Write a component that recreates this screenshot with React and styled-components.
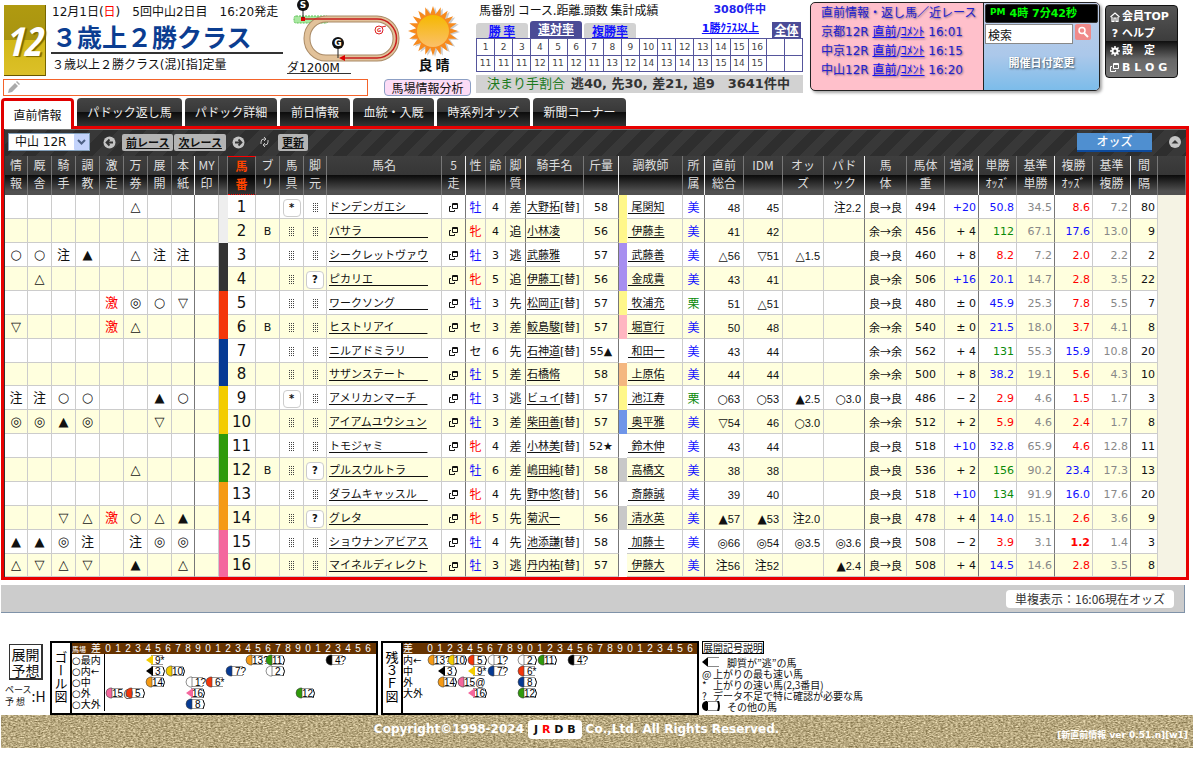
import { useState } from "react";
import styled, { createGlobalStyle, css } from "styled-components";

const latin = `"DejaVu Sans", "Noto Sans CJK JP", sans-serif`;
const cjk = `"Noto Sans CJK JP", sans-serif`;

// frame colours, one for every pair of horses
const frames = ["#eeeeee", "#333333", "#f4360a", "#063a94", "#f3cc00", "#2f9a0a", "#f59a14", "#f4679d"];

const YELLOW = "#fff78a";
const PURPLE = "#a78ff0";
const GREY = "#c8c8c8";

const tabs = [
  { name: "パドック返し馬", width: 105 },
  { name: "パドック詳細", width: 92 },
  { name: "前日情報", width: 70 },
  { name: "血統・入厩", width: 81 },
  { name: "時系列オッズ", width: 93 },
  { name: "新聞コーナー", width: 93 },
];

// w: width, l: the lines of the title, heavy: strong line on the right
const columns = [
  { w: 23, l: ["情", "報"] },
  { w: 24, l: ["厩", "舎"] },
  { w: 24, l: ["騎", "手"] },
  { w: 24, l: ["調", "教"] },
  { w: 24, l: ["激", "走"] },
  { w: 24, l: ["万", "券"] },
  { w: 24, l: ["展", "開"] },
  { w: 23, l: ["本", "紙"], heavy: true },
  { w: 24, l: ["MY", "印"] },
  { w: 9, l: [] },
  { w: 28, l: ["馬", "番"], sorted: true },
  { w: 24, l: ["ブ", "リ"] },
  { w: 24, l: ["馬", "具"] },
  { w: 23, l: ["脚", "元"] },
  { w: 115, l: ["馬名"] },
  { w: 24, l: ["5", "走"], heavy: true },
  { w: 20, l: ["性"] },
  { w: 20, l: ["齢"] },
  { w: 20, l: ["脚", "質"], heavy: true },
  { w: 58, l: ["騎手名"] },
  { w: 35, l: ["斤量"], heavy: true },
  { w: 8, l: ["調教師"], span: 2 },
  { w: 56, skip: true },
  { w: 22, l: ["所", "属"], heavy: true },
  { w: 39, l: ["直前", "総合"] },
  { w: 39, l: ["IDM"] },
  { w: 41, l: ["オッ", "ズ"] },
  { w: 41, l: ["パド", "ック"], heavy: true },
  { w: 42, l: ["馬", "体"] },
  { w: 38, l: ["馬体", "重"] },
  { w: 34, l: ["増減"], heavy: true },
  { w: 38, l: ["単勝", "ｵｯｽﾞ"] },
  { w: 38, l: ["基準", "単勝"], heavy: true },
  { w: 38, l: ["複勝", "ｵｯｽﾞ"] },
  { w: 38, l: ["基準", "複勝"], heavy: true },
  { w: 27, l: ["間", "隔"] },
  { l: [] },
];

// marks, blinkers, gear, legs, name, sex, age, style, jockey, changed, weight, trainer,
// trainer colour, area, index x4, track, body, diff, win, base win, place, base place, interval
const horses = [
  ["     △  ", "", "*", "", "ドンデンガエシ", "牡", 4, "差", "大野拓", 1, "58", "尾関知", YELLOW, "美", "48", "45", "", "注2.2", "良→良", 494, "+20", "50.8", "34.5", "8.6", "7.2", 80],
  ["        ", "B", "", "", "バサラ", "牝", 4, "追", "小林凌", 0, "56", "伊藤圭", YELLOW, "美", "41", "42", "", "", "余→余", 456, "+ 4", "112", "67.1", "17.6", "13.0", 9],
  ["○○注▲ △注注", "", "", "", "シークレットヴァウ", "牡", 3, "逃", "武藤雅", 0, "57", "武藤善", PURPLE, "美", "△56", "▽51", "△1.5", "", "良→良", 460, "+ 8", "8.2", "7.2", "2.0", "2.2", 2],
  [" △      ", "", "", "?", "ピカリエ", "牝", 5, "追", "伊藤工", 1, "56", "金成貴", PURPLE, "美", "43", "41", "", "", "良→余", 506, "+16", "20.1", "14.7", "2.8", "3.5", 22],
  ["    激◎○▽", "", "", "", "ワークソング", "牡", 3, "先", "松岡正", 1, "57", "牧浦充", YELLOW, "栗", "51", "△51", "", "", "良→良", 480, "± 0", "45.9", "25.3", "7.8", "5.5", 7],
  ["▽   激△  ", "B", "", "", "ヒストリアイ", "セ", 3, "差", "鮫島駿", 1, "57", "堀宣行", "#ffb6c1", "美", "50", "48", "", "", "余→余", 540, "± 0", "21.5", "18.0", "3.7", "4.1", 8],
  ["        ", "", "", "", "ニルアドミラリ", "セ", 6, "先", "石神道", 1, "55▲", "和田一", "", "美", "43", "44", "", "", "余→余", 562, "+ 4", "131", "55.3", "15.9", "10.8", 20],
  ["        ", "", "", "", "サザンステート", "牡", 5, "差", "石橋脩", 0, "58", "上原佑", "#f4b780", "美", "44", "44", "", "", "余→余", 500, "+ 8", "38.2", "19.1", "5.6", "4.3", 10],
  ["注注○○  ▲○", "", "*", "", "アメリカンマーチ", "牡", 3, "逃", "ビュイ", 1, "57", "池江寿", YELLOW, "栗", "○63", "○53", "▲2.5", "○3.0", "良→良", 486, "− 2", "2.9", "4.6", "1.5", "1.7", 3],
  ["◎◎▲◎  ▽ ", "", "", "", "アイアムユウシュン", "牡", 3, "差", "柴田善", 1, "57", "奥平雅", "#6f95e8", "美", "▽54", "46", "○3.0", "", "余→余", 512, "+ 2", "5.9", "4.6", "2.4", "1.7", 8],
  ["        ", "", "", "", "トモジャミ", "牝", 4, "差", "小林美", 1, "52★", "鈴木伸", "", "美", "43", "44", "", "", "良→良", 518, "+10", "32.8", "65.9", "4.6", "12.8", 11],
  ["     △  ", "B", "", "?", "プルスウルトラ", "牡", 6, "差", "嶋田純", 1, "58", "高橋文", GREY, "美", "38", "38", "", "", "良→良", 536, "+ 2", "156", "90.2", "23.4", "17.3", 13],
  ["        ", "", "", "", "ダラムキャッスル", "牝", 4, "先", "野中悠", 1, "56", "斎藤誠", "", "美", "39", "40", "", "", "良→良", 518, "+10", "134", "91.9", "16.0", "17.6", 20],
  ["  ▽△激○△▲", "", "", "?", "グレタ", "牝", 5, "先", "菊沢一", 0, "56", "清水英", GREY, "美", "▲57", "▲53", "注2.0", "", "良→良", 478, "+ 4", "14.0", "15.1", "2.6", "3.6", 9],
  ["▲▲◎注 注◎◎", "", "", "", "ショウナンアビアス", "牡", 4, "先", "池添謙", 1, "58", "加藤士", "", "美", "◎66", "◎54", "◎3.5", "◎3.6", "良→良", 508, "− 2", "3.9", "3.1", "1.2", "1.4", 3],
  ["△▽△▽ ▲ △", "", "", "", "マイネルディレクト", "牡", 3, "逃", "丹内祐", 1, "57", "伊藤大", "#ffffff", "美", "注56", "注52", "", "▲2.4", "良→良", 508, "+ 4", "14.5", "14.6", "2.8", "3.5", 8],
];

// [horse, place on the scale, row, suffix, front runner]
const goalMarks = [
  [9, 4, 0, "*", 1], [13, 14, 0, "?"], [11, 16, 0, ""], [4, 22, 0, "?"],
  [3, 4, 1, "", 1], [10, 6, 1, ""], [7, 12, 1, "?"], [2, 16, 1, ""],
  [14, 4, 2, ""], [1, 8, 2, "?"], [6, 10, 2, "*"],
  [15, 0, 3, "@"], [5, 2, 3, ""], [16, 8, 3, "", 1], [12, 19, 3, ""],
  [8, 8, 4, ""],
];
const lastMarks = [
  [13, 0, 0, "?"], [10, 2, 0, ""], [5, 4, 0, ""], [1, 6, 0, "?"], [2, 9, 0, ""], [11, 11, 0, ""], [4, 14, 0, "?"],
  [3, 1, 1, "", 1], [9, 4, 1, "*", 1], [7, 6, 1, "?"], [6, 9, 1, "*"],
  [14, 1, 2, ""], [15, 3, 2, "@"], [8, 9, 2, ""],
  [16, 4, 3, "", 1], [12, 9, 3, ""],
];

const winColor = (v) => (v >= 100 ? "#0a8a0a" : v < 10 ? "#f00" : "#11f");
const placeColor = (v) => (v < 10 ? "#f00" : "#11f");

/* ---------- icons ---------- */

const CourseMap = () => (
  <svg width="114" height="62" viewBox="0 0 114 62">
    <rect x="6" y="16" width="34" height="7" rx="2" fill="#a9e8a0" stroke="#5bbf55" strokeDasharray="2 1" />
    <rect x="19" y="19" width="89" height="39" rx="19" fill="none" stroke="#a98a66" strokeWidth="7" />
    <rect x="19" y="19" width="89" height="39" rx="19" fill="none" stroke="#e2c29a" strokeWidth="5" />
    <path d="M15 19H89a19 19 0 0 1 0 39H54" fill="none" stroke="#c81e1e" strokeWidth="1.5" />
    <path d="M51 58l6-3v6z" fill="#d00" />
    <rect x="13" y="17" width="4" height="4" fill="#d00" />
    <path d="M15 10v8M50 48v10" stroke="#222" />
    <circle cx="15" cy="5" r="6" fill="#111" />
    <circle cx="50" cy="43" r="6" fill="#111" />
    <circle cx="91" cy="30" r="4" fill="none" stroke="#d22" />
    <path d="M94 27l4-1" stroke="#d22" />
    <g fontFamily="DejaVu Sans" fontWeight="bold" textAnchor="middle">
      <text x="15" y="8" fontSize="9" fill="#fff">S</text>
      <text x="50" y="46" fontSize="9" fill="#fff">G</text>
      <text x="91" y="32" fontSize="5" fill="#d22">G</text>
    </g>
  </svg>
);

const Sun = () => {
  const pts = [];
  for (let i = 0; i < 40; i++) {
    const r = i % 2 ? 17 : 25;
    const a = (i * Math.PI) / 20;
    pts.push(`${26 + r * Math.cos(a)},${26 + r * Math.sin(a)}`);
  }
  return (
    <svg width="54" height="52" viewBox="0 0 54 52">
      <defs>
        <linearGradient id="sun" x1="0" y1="0" x2="0" y2="1">
          <stop offset="0" stopColor="#f5b800" />
          <stop offset="1" stopColor="#fbc06a" />
        </linearGradient>
      </defs>
      <polygon points={pts.join(" ")} fill="#ccc" transform="translate(2 1)" />
      <polygon points={pts.join(" ")} fill="#f78a1d" />
      <circle cx="26" cy="26" r="16" fill="url(#sun)" />
    </svg>
  );
};

const Pencil = () => (
  <svg width="14" height="13" viewBox="0 0 14 13">
    <path d="M1 12l1-4 6-6 3 3-6 6zM9 1l1-1 3 3-1 1z" fill="#aaa" />
  </svg>
);

const RoundArrow = ({ turn = 0 }) => (
  <svg width="13" height="13" viewBox="0 0 13 13">
    <circle cx="6.5" cy="6.5" r="6" fill="#c4c4c4" />
    <path d="M10 6.5H4M6.5 3.5l-3 3 3 3" stroke="#333" strokeWidth="1.8" fill="none" transform={`rotate(${turn} 6.5 6.5)`} />
  </svg>
);

const Refresh = () => (
  <svg width="11" height="12" viewBox="0 0 11 12" fill="none" stroke="#c4c4c4">
    <path d="M2 8V6a3 3 0 0 1 3-3h2M5 1l2 2-2 2M9 4v2a3 3 0 0 1-3 3H4M6 7L4 9l2 2" />
  </svg>
);

const UpMark = () => (
  <svg width="12" height="12" viewBox="0 0 12 12">
    <circle cx="6" cy="6" r="6" fill="#c4c4c4" />
    <path d="M2.5 7.5L6 4l3.5 3.5z" fill="#333" />
  </svg>
);

const Chevron = () => (
  <svg width="15" height="16" viewBox="0 0 15 16">
    <rect width="15" height="16" rx="1" fill="#c3d3fb" />
    <path d="M4 6l3.5 3.5L11 6" fill="none" stroke="#4d6185" strokeWidth="2" />
  </svg>
);

const Popup = ({ color = "#111" }) => (
  <svg width="10" height="9" viewBox="0 0 10 9" fill="none" stroke={color}>
    <path d="M3.500 .5h5v5h-5zM3.500 1.500h5M2 3.500H.5v5h5V7" />
  </svg>
);

const Grip = () => (
  <svg width="5" height="10" viewBox="0 0 5 10" stroke="#444" strokeDasharray="1 1">
    <path d="M.5 0v10M2.500 0v10M4.500 0v10" />
  </svg>
);

const Lens = () => (
  <svg width="12" height="12" viewBox="0 0 12 12" fill="none" stroke="#fff">
    <circle cx="5" cy="4.500" r="3" strokeWidth="1.5" />
    <path d="M7 7l4 4" strokeWidth="2" />
  </svg>
);

const House = () => (
  <svg width="10" height="10" viewBox="0 0 10 10" fill="none" stroke="#fff" strokeWidth="1.2">
    <path d="M.5 5L5 1l4.500 4M2 5v4.400h2V6h2v3.400h2V5" />
  </svg>
);

const Gear = () => (
  <svg width="10" height="10" viewBox="0 0 10 10" fill="none" stroke="#fff">
    <circle cx="5" cy="5" r="2.500" strokeWidth="2" />
    <path d="M5 0v2M5 8v2M0 5h2M8 5h2M1.500 1.500L3 3M7 7l1.500 1.500M8.500 1.500L7 3M3 7L1.500 8.500" strokeWidth="1.5" />
  </svg>
);

/* ---------- position charts ---------- */

const Marker = ({ x, y, no, suffix, front }) => {
  const color = no <= 2 ? "#fff" : no === 3 || no === 4 ? "#000" : frames[Math.ceil(no / 2) - 1];
  return (
    <g>
      <path d={`M${x + 5} ${y - 4.5}h12M${x + 5} ${y + 4.5}h12`} stroke="#999" fill="none" />
      {front ? (
        <path d={`M${x} ${y}l7-5v10z`} fill={color} />
      ) : (
        <path d={`M${x + 6} ${y - 5}h-2q-4 1-4 5t4 5h2z`} fill={color} stroke="#444" strokeWidth=".6" />
      )}
      {suffix === "" && <path d={`M${x + 17} ${y - 4}q3 4 0 9`} stroke="#000" fill="none" />}
      <text x={x + (no > 9 ? 6 : 9)} y={y + 4}>{no}{suffix}</text>
    </g>
  );
};

const Chart = ({ width, title, first, ground, rows, marks, line }) => (
  <svg width={width} height="74" viewBox={`0 0 ${width} 74`}>
    <rect x="1" y="1" width={width - 2} height="72" fill="#fff" stroke="#000" strokeWidth="2" />
    <rect x="21" y="2" width={width - 23} height="11" fill="#663300" />
    <path d="M21 1v72" stroke="#000" strokeWidth="2" />
    {line && <path d="M54.500 13v57" stroke="#000" />}
    <text x="11" y="10" fontFamily="Noto Sans CJK JP" fontSize="13" writingMode="vertical-rl">{title}</text>
    <g fontFamily="Noto Sans CJK JP" fill="#fff">
      {ground && <text x="22" y="11" fontSize="7">馬場</text>}
      <text x={ground ? 41 : 22} y="11" fontSize="10">差</text>
    </g>
    <g fontFamily="Liberation Sans" fontSize="10" fill="#fff" textAnchor="middle">
      {Array.from({ length: 27 }, (_, i) => (
        <text key={i} x={first + i * 10} y="11">{i % 10}</text>
      ))}
    </g>
    <g fontFamily="DejaVu Sans, Noto Sans CJK JP" fontSize="10">
      {rows.map((r, i) => (
        <text key={r} x="22" y={23 + i * 11}>{r}</text>
      ))}
    </g>
    <g fontFamily="Liberation Sans" fontSize="10">
      {marks.map(([no, at, row, suffix, front]) => (
        <Marker key={no} no={no} x={first - 2 + at * 10} y={19 + row * 11} suffix={suffix} front={front} />
      ))}
    </g>
  </svg>
);

/* ---------- page ---------- */

const Index = ({ value, heavy }) => {
  const [, sign, number] = value.match(/^(\D?)(.*)$/);
  return (
    <IndexCell $heavy={heavy}>
      {sign && <Sign>{sign}</Sign>}
      {number}
    </IndexCell>
  );
};

const Horse = ({ no, data }) => {
  const [marks, blinker, gear, legs, name, sex, age, style, jockey, changed, weight, trainer, tcolor, area, total, idm, odds, paddock, track, body, diff, win, baseWin, place, basePlace, interval] = data;
  const sexColor = { 牡: "#11f", 牝: "#f00" }[sex];
  return (
    <Row>
      {[...marks].map((m, i) => (
        <SignCell key={i} $heavy={i === 7} $color={m === "激" && "#f00"}>{m}</SignCell>
      ))}
      <Cell />
      <Swatch $color={frames[Math.ceil(no / 2) - 1]} />
      <NumberCell>{no}</NumberCell>
      <Cell>{blinker}</Cell>
      <Cell>{gear ? <Note>{gear}</Note> : <Grip />}</Cell>
      <Cell>{legs ? <Note>{legs}</Note> : <Grip />}</Cell>
      <NameCell><Link href="#horse">{name.padEnd(9, "　")}</Link></NameCell>
      <Cell $heavy><Popup /></Cell>
      <MarkCell $color={sexColor}>{sex}</MarkCell>
      <Cell>{age}</Cell>
      <MarkCell $heavy>{style}</MarkCell>
      <NameCell $tight><Link href="#jockey">{jockey}</Link>{changed ? "[替]" : ""}</NameCell>
      <Cell $heavy>{weight}</Cell>
      <Swatch $color={tcolor} />
      <NameCell $tight><Link href="#trainer">{" " + trainer}</Link></NameCell>
      <MarkCell $heavy $color={area === "栗" ? "#0a8a0a" : "#11f"}>{area}</MarkCell>
      <Index value={total} />
      <Index value={idm} />
      <Index value={odds} />
      <Index value={paddock} heavy />
      <TrackCell>{track}</TrackCell>
      <Cell>{body}</Cell>
      <ValueCell $heavy $color={!diff.includes(" ") && "#11f"}>{diff}</ValueCell>
      <ValueCell $color={winColor(win)}>{win}</ValueCell>
      <ValueCell $heavy $color="#888">{baseWin}</ValueCell>
      <ValueCell $color={placeColor(place)} $bold={place < 1.5}>{place}</ValueCell>
      <ValueCell $heavy $color="#888">{basePlace}</ValueCell>
      <ValueCell>{interval}</ValueCell>
      <Filler />
    </Row>
  );
};

const App = () => {
  const [race, setRace] = useState("中山 12R");
  const [comment, setComment] = useState("");
  const [search, setSearch] = useState("検索");

  return (
    <>
      <GlobalStyle />
      <Header>
        <RaceBlock>
          <RaceTop>
            <Badge>12</Badge>
            <RaceInfo>
              <Line>12月1日(<Red>日</Red>)　5回中山2日目　16:20発走</Line>
              <RaceTitle>３歳上２勝クラス</RaceTitle>
              <Line>３歳以上２勝クラス(混)[指]定量</Line>
            </RaceInfo>
            <Course>
              <CourseMap />
              <Distance>ダ1200M</Distance>
            </Course>
            <Weather>
              <Sun />
              良 晴
            </Weather>
          </RaceTop>
          <CommentRow>
            <CommentBox>
              <Pencil />
              <CommentInput aria-label="コメント" value={comment} onChange={(e) => setComment(e.target.value)} />
            </CommentBox>
            <AnalysisButton>馬場情報分析</AnalysisButton>
          </CommentRow>
        </RaceBlock>

        <Stats>
          <StatsTitle>
            <span>馬番別 コース.距離.頭数 集計成績</span>
            <Count>3080件中</Count>
          </StatsTitle>
          <StatsTabs>
            <StatsTab href="#win">勝 率</StatsTab>
            <StatsTab href="#quinella" $on>連対率</StatsTab>
            <StatsTab href="#show">複勝率</StatsTab>
            <ClassLink href="#class">1勝ｸﾗｽ以上</ClassLink>
            <AllButton>全体</AllButton>
          </StatsTabs>
          <StatsTable>
            <tbody>
              <tr>
                {Array.from({ length: 18 }, (_, i) => <td key={i}>{i < 16 ? i + 1 : ""}</td>)}
              </tr>
              <tr>
                {[11, 11, 11, 12, 11, 12, 11, 13, 12, 14, 13, 14, 13, 15, 14, 15, "", ""].map((n, i) => <td key={i}>{n}</td>)}
              </tr>
            </tbody>
          </StatsTable>
          <Ratio>
            <Green>決まり手割合</Green>
            逃40, 先30, 差21, 追9　3641件中
          </Ratio>
        </Stats>

        <Board>
          <NextRaces>
            <div>直前情報・返し馬／近レース</div>
            {[["京都", "16:01"], ["中京", "16:15"], ["中山", "16:20"]].map(([place, time]) => (
              <div key={place}>
                {place}12R <a href="#latest">直前</a>/<a href="#comment">ｺﾒﾝﾄ</a> {time}
              </div>
            ))}
          </NextRaces>
          <Tools>
            <Clock><small>PM</small>4時 7分42秒</Clock>
            <SearchRow>
              <SearchInput aria-label="検索" value={search} onChange={(e) => setSearch(e.target.value)} />
              <SearchButton aria-label="検索する"><Lens /></SearchButton>
            </SearchRow>
            <DateButton>開催日付変更</DateButton>
          </Tools>
        </Board>

        <Menu>
          <a href="#top"><House />会員TOP</a>
          <a href="#help"><b>?</b>ヘルプ</a>
          <a href="#settings"><Gear />設　定</a>
          <a href="#blog"><Popup color="#fff" />B L O G</a>
        </Menu>
      </Header>

      <Main>
        <Tabs>
          <ActiveTab>直前情報</ActiveTab>
          {tabs.map((t) => (
            <Tab key={t.name} $width={t.width}>{t.name}</Tab>
          ))}
        </Tabs>
        <Panel>
          <Toolbar>
            <SelectBox>
              <RaceSelect aria-label="レース" value={race} onChange={(e) => setRace(e.target.value)}>
                <option>中山 12R</option>
                <option>中山 11R</option>
              </RaceSelect>
              <Chevron />
            </SelectBox>
            <Pager>
              <RoundArrow />
              <div>
                <ToolLink href="#prev">前レース</ToolLink>
                <ToolLink href="#next">次レース</ToolLink>
              </div>
              <RoundArrow turn={180} />
            </Pager>
            <Reload>
              <Refresh />
              <ToolLink href="#reload">更新</ToolLink>
            </Reload>
            <OddsButton>オッズ</OddsButton>
            <UpMark />
          </Toolbar>
          <RaceTable>
            <colgroup>
              {columns.map((c, i) => <Col key={i} $width={c.w} />)}
            </colgroup>
            <thead>
              <tr>
                {columns.filter((c) => !c.skip).map((c, i) => (
                  <HeadCell key={i} colSpan={c.span} $heavy={c.heavy} $sorted={c.sorted}>
                    {c.l.map((t) => <div key={t}>{t}</div>)}
                  </HeadCell>
                ))}
              </tr>
            </thead>
            <tbody>
              {horses.map((h, i) => <Horse key={i} no={i + 1} data={h} />)}
            </tbody>
          </RaceTable>
        </Panel>
      </Main>

      <StatusBar>
        <Status>単複表示：16:06現在オッズ</Status>
      </StatusBar>

      <Forecast>
        <Pace>
          <PaceButton>展開<br />予想</PaceButton>
          <PaceText>
            <div>ペース<br />予 想</div>
            <span>:H</span>
          </PaceText>
        </Pace>
        <Chart width={328} title="ゴール図" first={58} ground line rows={["○最内", "○内←", "○中", "○外", "○大外"]} marks={goalMarks} />
        <Chart width={318} title="残３Ｆ図" first={49} rows={["内←", "中", "外", "大外"]} marks={lastMarks} />
        <Legend>
          <LegendTitle>展開記号説明</LegendTitle>
          <div>
            <svg width="18" height="10" viewBox="0 0 18 10"><path d="M0 5l6-5v10z" /><path d="M5 .5h12M5 9.500h12" stroke="#888" /></svg>
            脚質が”逃”の馬
          </div>
          <div><LegendKey>@</LegendKey>上がりの最も速い馬</div>
          <div><LegendKey>*</LegendKey>上がりの速い馬(2,3番目)</div>
          <div><LegendKey>?</LegendKey>データ不足で特に確認が必要な馬</div>
          <div>
            <svg width="18" height="10" viewBox="0 0 18 10"><path d="M6 0H4Q0 1 0 5t4 5h2z" /><path d="M5 .5h12M5 9.500h12" stroke="#888" /><path d="M16 0q2 5 0 10" stroke="#000" strokeWidth="2" fill="none" /></svg>
            その他の馬
          </div>
        </Legend>
      </Forecast>

      <Footer>
        <Sand>
          <filter id="sand" x="0" y="0" width="100%" height="100%" colorInterpolationFilters="sRGB">
            <feTurbulence type="fractalNoise" baseFrequency=".4 .8" numOctaves="2" seed="4" />
            <feColorMatrix values=".7 0 0 0 .37  .7 0 0 0 .31  .7 0 0 0 .15  0 0 0 0 1" />
          </filter>
          <rect width="100%" height="100%" filter="url(#sand)" />
        </Sand>
        <Copyright>
          Copyright©1998-2024
          <Logo>J <Red>R</Red> D B</Logo>
          Co.,Ltd. All Rights Reserved.
        </Copyright>
        <Version>[新直前情報 ver 0.51.n][w1]</Version>
      </Footer>
    </>
  );
};

export default App;

const GlobalStyle = createGlobalStyle`
  * { box-sizing: border-box; }
  body {
    margin: 0;
    background: #fff;
    color: #111;
    font: 12px/16px ${latin};
  }
  button, input, select { font: inherit; color: inherit; margin: 0; }
  svg { flex: none; }
`;

const Red = styled.span`
  color: #f00;
`;

const Green = styled.span`
  color: #1d7a1d;
  font-weight: normal;
`;

const Header = styled.header`
  display: flex;
  align-items: flex-start;
  padding-left: 3px;
  white-space: nowrap;
`;

const RaceBlock = styled.section`
  flex: none;
  width: 468px;
  margin-right: 5px;
`;

const RaceTop = styled.div`
  display: flex;
  height: 79px;
`;

const Badge = styled.div`
  width: 42px;
  height: 71px;
  margin: 5px 5px 0 1px;
  padding-right: 4px;
  background: linear-gradient(#b09a10, #a89410 50%, #d2b818 50%, #dcc028);
  border-bottom: 1px solid #665500;
  border-right: 1px solid #776600;
  color: #fff;
  font: italic bold 40px/71px "Open Sans Condensed", "Liberation Sans Narrow", sans-serif;
  text-align: center;
  text-shadow: 2px 1px 1px #7a6a00;
`;

const RaceInfo = styled.div`
  width: 232px;
  padding-top: 4px;
`;

const Line = styled.div`
  padding-left: 1px;
`;

const RaceTitle = styled.h1`
  margin: 0 0 3px;
  padding-left: 1px;
  border-bottom: 2px solid #333;
  color: #0b3d91;
  font: bold 25px/32px ${cjk};
`;

const Course = styled.div`
  width: 124px;
  padding-left: 4px;
  display: flex;
  flex-direction: column;

  svg { margin-left: 1px; }
`;

const Distance = styled.div`
  width: 64px;
  height: 12px;
  line-height: 12px;
  border-bottom: 1px solid #333;
`;

const Weather = styled.div`
  display: flex;
  flex-direction: column;
  align-items: center;
  padding-top: 5px;
  font: bold 14px/15px ${cjk};
`;

const CommentRow = styled.div`
  display: flex;
  gap: 16px;
  height: 17px;
  margin-bottom: 2px;
`;

const CommentBox = styled.label`
  flex: 1;
  display: flex;
  align-items: center;
  padding-left: 3px;
  border: 1px solid #f4632a;
`;

const CommentInput = styled.input`
  flex: 1;
  height: 14px;
  border: 0;
  outline: 0;
  font-size: 11px;
`;

const AnalysisButton = styled.button`
  width: 87px;
  padding: 0;
  background: #fcdcf6;
  border: 1px solid #8c9fc4;
  border-radius: 4px;
  font: 12px/14px ${cjk};
`;

const Stats = styled.section`
  flex: none;
  width: 327px;
  margin-right: 7px;
`;

const StatsTitle = styled.div`
  display: flex;
  justify-content: space-between;
  padding: 2px 37px 4px 3px;
  height: 22px;
  font: 12px/16px ${cjk};
`;

const Count = styled.span`
  color: #22e;
  font: bold 11px/16px ${latin};
`;

const StatsTabs = styled.div`
  display: flex;
  align-items: flex-end;
  gap: 2px;
  height: 16px;
  font: bold 12px/15px ${cjk};
`;

const StatsTab = styled.a`
  width: 52px;
  height: ${({ $on }) => ($on ? 17 : 15)}px;
  border-radius: 3px 3px 0 0;
  background: ${({ $on }) => ($on ? "#4b4b96" : "#d2d2d2")};
  color: ${({ $on }) => ($on ? "#fff" : "#11f")};
  text-align: center;
`;

const ClassLink = styled.a`
  margin-left: auto;
  margin-right: 11px;
  color: #11f;
  font: bold 11px/18px ${latin};
`;

const AllButton = styled.button`
  width: 29px;
  height: 16px;
  margin-right: 2px;
  padding: 0;
  border: 0;
  background: #4b4b96;
  color: #fff;
  font: bold 12px/14px ${cjk};
  text-decoration: underline;
`;

const StatsTable = styled.table`
  width: 100%;
  height: 34px;
  table-layout: fixed;
  border-collapse: collapse;
  font-size: 9px;
  line-height: 14px;
  text-align: center;
  color: #444;

  td { border: 1px solid #55559c; padding: 0; }
  tr { height: 16px; }
`;

const Ratio = styled.div`
  height: 18px;
  margin-top: 3px;
  padding-left: 11px;
  background: #d2d2d2;
  color: #333;
  font: bold 13px/17px ${latin};
  display: flex;
  gap: 6px;
`;

const Board = styled.section`
  flex: none;
  display: flex;
  width: 290px;
  height: 89px;
  margin: 2px 5px 0 0;
  border: 1px solid #222;
  border-radius: 5px;
  background: #ffc0cb;
  box-shadow: 2px 2px 3px rgba(0, 0, 0, 0.35);
  overflow: hidden;
`;

const NextRaces = styled.div`
  flex: 1;
  padding: 1px 0 0 10px;
  color: #22c;
  line-height: 19px;
  text-shadow: 1px 1px 2px rgba(0, 0, 60, 0.5);

  a { color: #11e; }
`;

const Tools = styled.div`
  width: 116px;
  padding: 1px;
  border-left: 1px solid #222;
  background: linear-gradient(#c0cde8, #abc8ea 60%, #7cbcea);
  display: flex;
  flex-direction: column;
  align-items: center;
`;

const Clock = styled.div`
  align-self: stretch;
  height: 19px;
  padding-left: 4px;
  border: 1px solid #333;
  border-radius: 2px;
  background: #000;
  color: #0f0;
  font: bold 11px/17px ${latin};

  small { font-size: 9px; margin-right: 4px; vertical-align: 2px; line-height: 1; }
`;

const SearchRow = styled.div`
  align-self: stretch;
  display: flex;
  gap: 2px;
  margin-top: 1px;
`;

const SearchInput = styled.input`
  width: 88px;
  height: 20px;
  padding: 0 2px;
  border: 1px solid #888;
  background: #fff;
`;

const SearchButton = styled.button`
  width: 16px;
  height: 16px;
  padding: 2px;
  border: 0;
  border-radius: 2px;
  background: #f08a8a;
  display: flex;
`;

const DateButton = styled.button`
  margin-top: 10px;
  padding: 0;
  border: 0;
  background: none;
  color: #fff;
  font: bold 11px/17px ${cjk};
  text-shadow: 1px 1px 2px #345;
`;

const Menu = styled.nav`
  flex: none;
  width: 73px;
  height: 73px;
  margin-top: 5px;
  padding: 2px 0 0 4px;
  border: 1px solid #111;
  border-radius: 4px;
  background: linear-gradient(#555, #3c3c3c 50%, #111 50%, #666 75%, #777);

  a {
    display: flex;
    align-items: center;
    gap: 2px;
    height: 17px;
    color: #fff;
    font: bold 11px/17px ${latin};
    text-decoration: none;
  }
  b { width: 10px; text-align: center; }
`;

const Main = styled.main`
  margin: 0 11px 0 1px;
`;

const Tabs = styled.div`
  display: flex;
  gap: 3px;
  height: 28px;
`;

const tabText = css`
  padding: 0;
  font: 12px/24px ${cjk};
  text-align: center;
  white-space: nowrap;
`;

const ActiveTab = styled.button`
  ${tabText}
  width: 73px;
  height: 31px;
  border: solid #e00000;
  border-width: 3px 3px 0;
  border-radius: 4px 4px 0 0;
  background: #fff;
  position: relative;
`;

const Tab = styled.button`
  ${tabText}
  width: ${({ $width }) => $width}px;
  border: 0;
  border-radius: 4px 4px 0 0;
  background: linear-gradient(#444, #383838 50%, #0c0c0c 50%, #333);
  color: #eee;
`;

const Panel = styled.section`
  border: 3px solid #e80000;
  background: #333;
  padding-left: 1px;
`;

const Toolbar = styled.div`
  display: flex;
  align-items: center;
  height: 27px;
  padding: 0 5px 2px 3px;
  border-top: 1px solid #777;
  background: repeating-linear-gradient(135deg, #383838 0 10px, #2e2e2e 10px 20px);
`;

const SelectBox = styled.span`
  position: relative;
  margin-right: 13px;

  svg {
    position: absolute;
    top: 1px;
    right: 1px;
    pointer-events: none;
  }
`;

const RaceSelect = styled.select`
  display: block;
  width: 82px;
  height: 18px;
  padding: 0 6px;
  appearance: none;
  border: 1px solid #7f9db9;
  border-radius: 0;
  background: #fff;
`;

const Pager = styled.div`
  display: flex;
  align-items: center;
  gap: 6px;
  margin-right: 14px;

  div { display: flex; gap: 1px; }
`;

const Reload = styled(Pager)`
  gap: 8px;
  margin-right: auto;
`;

const ToolLink = styled.a`
  height: 17px;
  padding: 0 4px;
  border-radius: 2px;
  background: #b4b4b4;
  color: #111;
  font: bold 11px/16px ${cjk};
`;

const OddsButton = styled.button`
  width: 75px;
  height: 19px;
  margin-right: 17px;
  padding: 0;
  border: 0;
  border-bottom: 2px solid #0d4a9c;
  background: #4f8fd0;
  color: #fff;
  font: 500 12px/16px ${cjk};
`;

const RaceTable = styled.table`
  width: 100%;
  table-layout: fixed;
  border-collapse: separate;
  border-spacing: 0;
  font-size: 11px;
  line-height: 16px;
  white-space: nowrap;
`;

const Col = styled.col`
  width: ${({ $width }) => ($width ? `${$width}px` : "auto")};
`;

const HeadCell = styled.th`
  height: 39px;
  padding: 0;
  vertical-align: top;
  border-right: 1px solid ${({ $heavy }) => ($heavy ? "#eee" : "#777")};
  background: linear-gradient(#3e3e3e, #363636 49%, #0a0a0a 49%, #505050 90%);
  color: #ddd;
  font: 12px/18px ${cjk};

  ${({ $sorted }) => $sorted && css`
    color: #ff4400;
    font-weight: bold;
    background: linear-gradient(#333, #222 49%, #000 49%, #333);
    border-top: 1px solid #f00;
    border-bottom: 1px dotted #f00;
  `}
`;

const Row = styled.tr`
  height: 24px;
  background: #fff;

  &:nth-child(even) { background: #ffffde; }
  &:nth-child(8n) { height: 23px; }
`;

const Cell = styled.td`
  padding: 2px 0 0;
  border-right: 1px solid ${({ $heavy }) => ($heavy ? "#777" : "#ccc")};
  border-bottom: 1px solid #ccc;
  color: ${({ $color }) => $color || "#111"};
  text-align: center;

  svg { display: block; margin: 0 auto; }
`;

const MarkCell = styled(Cell)`
  padding-top: 0;
  font: 12px/16px ${cjk};
`;

const SignCell = styled(MarkCell)`
  font-size: 13px;
  font-family: ${latin};
`;

const NumberCell = styled(Cell)`
  padding-top: 0;
  font-size: 15px;
`;

const Swatch = styled.td`
  padding: 0;
  background: ${({ $color }) => $color || "transparent"};
`;

const NameCell = styled(Cell)`
  padding-left: ${({ $tight }) => ($tight ? 1 : 2)}px;
  text-align: left;
  white-space: pre;
`;

const IndexCell = styled(Cell)`
  padding-right: 3px;
  font: 11px/16px "Liberation Sans", ${cjk};
  text-align: right;
`;

const Sign = styled.span`
  font-family: ${latin};
  font-size: 12px;
`;

const TrackCell = styled(Cell)`
  padding-top: 0;
  font: 11px/16px ${cjk};
`;

const ValueCell = styled(Cell)`
  padding-right: 2px;
  font-weight: ${({ $bold }) => ($bold ? "bold" : "normal")};
  text-align: right;
`;

const Filler = styled.td`
  background: #f5f3e4;
`;

const Link = styled.a`
  color: #111;
  text-underline-offset: 2px;
`;

const Note = styled.button`
  width: 18px;
  height: 18px;
  padding: 0;
  display: block;
  margin: 0 auto;
  border: 1px solid #ccc;
  border-radius: 4px;
  background: #fff;
  font: bold 10px/14px ${latin};
`;

const StatusBar = styled.div`
  display: flex;
  justify-content: flex-end;
  align-items: center;
  height: 28px;
  margin: 5px 15px 28px 1px;
  padding-right: 10px;
  background: #ccc;
  border: solid #7f92a8;
  border-width: 0 1px 1px 0;
`;

const Status = styled.div`
  padding: 0 9px;
  border-radius: 4px;
  background: #fff;
  color: #333;
  font: 12px/18px ${cjk};
`;

const Forecast = styled.section`
  display: flex;
  gap: 3px;
  padding-left: 5px;
`;

const Pace = styled.div`
  width: 42px;
  margin-top: 3px;
`;

const PaceButton = styled.button`
  width: 34px;
  height: 36px;
  margin-left: 4px;
  padding: 0;
  border: solid #333;
  border-width: 1px 2px 2px 1px;
  background: #fff;
  font: 14px/16px ${cjk};
`;

const PaceText = styled.div`
  display: flex;
  align-items: center;
  margin-top: 4px;
  font: 9px/12px ${cjk};
  white-space: nowrap;

  span { font-size: 14px; }
`;

const Legend = styled.div`
  font: 10px/11px ${cjk};
  white-space: nowrap;

  svg { vertical-align: top; margin-right: 7px; }
`;

const LegendTitle = styled.div`
  display: inline-block;
  height: 13px;
  margin-bottom: 3px;
  border: 1px solid #000;
`;

const LegendKey = styled.span`
  display: inline-block;
  width: 11px;
`;

const Footer = styled.footer`
  position: relative;
  display: flex;
  align-items: center;
  height: 33px;
  margin: 0 7px 0 1px;
  padding: 0 5px;
  color: #fff;
  white-space: nowrap;
`;

const Sand = styled.svg`
  position: absolute;
  inset: 0;
  width: 100%;
  height: 100%;
`;

const Copyright = styled.div`
  position: relative;
  flex: 1;
  padding: 0 0 5px 90px;
  font: bold 12px/19px ${latin};
  text-align: center;
`;

const Logo = styled.span`
  display: inline-block;
  margin: 0 4px;
  padding: 0 6px;
  border-radius: 4px;
  background: #fff;
  color: #111;
  font-size: 11px;
`;

const Version = styled.div`
  position: relative;
  padding-top: 6px;
  font: bold 9px/12px ${latin};
`;
